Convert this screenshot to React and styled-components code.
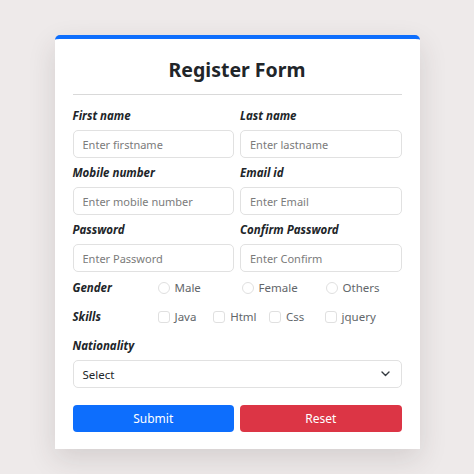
import React from "react";
import styled, { createGlobalStyle } from "styled-components";

const GlobalStyle = createGlobalStyle`
  * { box-sizing: border-box; }
  body {
    margin: 0;
    background: #eeeaea;
    font-family: "Noto Sans", "Open Sans", sans-serif;
    color: #212529;
  }
`;

const Page = styled.div`
  min-height: 474px;
  display: flex;
  justify-content: center;
  align-items: flex-start;
  padding-top: 35px;
`;

const Card = styled.form`
  width: 365px;
  background: #fff;
  border-top: 4px solid #0d6efd;
  border-radius: 5px 5px 0 0;
  box-shadow: 0 10px 28px rgba(60, 40, 40, 0.14);
  padding: 0 18px 17px;
`;

const Title = styled.h2`
  margin: 19px 0 0;
  font-size: 19.5px;
  line-height: 24px;
  font-weight: 700;
  text-align: center;
  color: #212529;
`;

const Rule = styled.hr`
  margin: 12px 0 13px;
  border: 0;
  border-top: 1px solid #d9d9d9;
`;

const Grid = styled.div`
  display: grid;
  grid-template-columns: 1fr 1fr;
  column-gap: 6px;
  row-gap: 7px;
`;

const Field = styled.div`
  display: flex;
  flex-direction: column;
  gap: 6px;
`;

const Label = styled.label`
  font-size: 11.5px;
  line-height: 16px;
  font-weight: 700;
  font-style: italic;
  color: #212529;
`;

const Input = styled.input`
  height: 28px;
  width: 100%;
  border: 1px solid #e1e1e1;
  border-radius: 5px;
  padding: 0 9px;
  font-family: inherit;
  font-size: 11px;
  color: #212529;
  background: #fff;
  &::placeholder { color: #7b7b7b; }
`;

const ChoiceRow = styled.div`
  display: grid;
  grid-template-columns: 84px repeat(${({ cols }) => cols}, ${({ step }) => step}px);
  align-items: center;
  height: 16px;
  margin-top: ${({ top }) => top}px;
`;

const Choice = styled.label`
  display: flex;
  align-items: center;
  gap: 5px;
  padding-left: 1px;
  font-size: 11.5px;
  line-height: 16px;
  color: #62666a;
`;

const Box = styled.span`
  width: 12px;
  height: 12px;
  border: 1px solid #e0e0e0;
  border-radius: ${({ round }) => (round ? "50%" : "3px")};
  background: #fff;
  flex: none;
`;

const Nationality = styled(Field)`
  margin-top: 13px;
`;

const SelectBox = styled.div`
  height: 28px;
  border: 1px solid #e1e1e1;
  border-radius: 5px;
  display: flex;
  align-items: center;
  justify-content: space-between;
  padding: 0 11px 0 9px;
  font-size: 11.5px;
  color: #212529;
`;

const Buttons = styled.div`
  display: grid;
  grid-template-columns: 1fr 1fr;
  gap: 6px;
  margin-top: 17px;
`;

const Button = styled.button`
  height: 27px;
  border: 0;
  border-radius: 4px;
  background: ${({ tone }) => (tone === "danger" ? "#dc3545" : "#0d6efd")};
  color: #fff;
  font-family: inherit;
  font-size: 12px;
`;

const fields = [
  ["First name", "Enter firstname"],
  ["Last name", "Enter lastname"],
  ["Mobile number", "Enter mobile number"],
  ["Email id", "Enter Email"],
  ["Password", "Enter Password"],
  ["Confirm Password", "Enter Confirm"],
];

export default function App() {
  return (
    <>
      <GlobalStyle />
      <Page>
        <Card onSubmit={(e) => e.preventDefault()}>
          <Title>Register Form</Title>
          <Rule />
          <Grid>
            {fields.map(([label, ph]) => (
              <Field key={label}>
                <Label>{label}</Label>
                <Input placeholder={ph} />
              </Field>
            ))}
          </Grid>

          <ChoiceRow cols={3} step={84} top={8}>
            <Label>Gender</Label>
            {["Male", "Female", "Others"].map((g) => (
              <Choice key={g}>
                <Box round />
                {g}
              </Choice>
            ))}
          </ChoiceRow>

          <ChoiceRow cols={4} step={55.7} top={13}>
            <Label>Skills</Label>
            {["Java", "Html", "Css", "jquery"].map((s) => (
              <Choice key={s}>
                <Box />
                {s}
              </Choice>
            ))}
          </ChoiceRow>

          <Nationality>
            <Label>Nationality</Label>
            <SelectBox>
              Select
              <svg width="9" height="6" viewBox="0 0 9 6" fill="none">
                <path d="M1 1l3.5 3.5L8 1" stroke="#343a40" strokeWidth="1.4" strokeLinecap="round" strokeLinejoin="round" />
              </svg>
            </SelectBox>
          </Nationality>

          <Buttons>
            <Button type="submit">Submit</Button>
            <Button type="reset" tone="danger">Reset</Button>
          </Buttons>
        </Card>
      </Page>
    </>
  );
}
